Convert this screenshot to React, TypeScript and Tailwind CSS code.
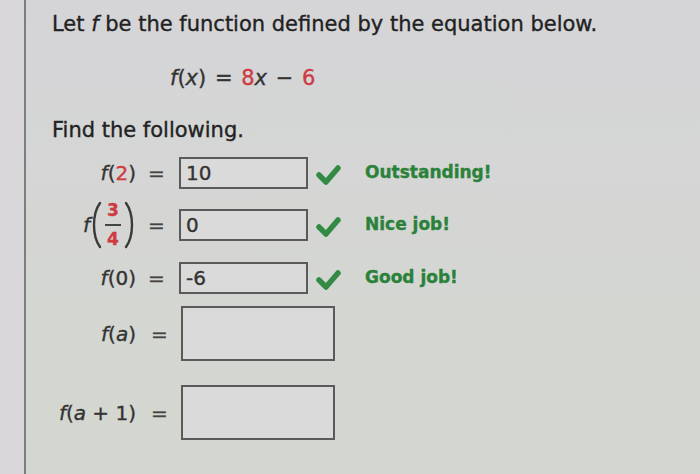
import React from 'react'

const font = "font-['DejaVu_Sans','Verdana',sans-serif]"

function Check() {
  return (
    <svg width="26" height="21" viewBox="0 0 26 21" className="shrink-0">
      <path d="M4 11 L11 18 L23 4" fill="none" stroke="#338a45" strokeWidth="5.5" strokeLinecap="round" strokeLinejoin="round" />
    </svg>
  )
}

function Paren({ flip }: { flip?: boolean }) {
  return (
    <svg width="12" height="48" viewBox="0 0 12 48" className={flip ? '-scale-x-100' : ''}>
      <path d="M10 2 C2 13 2 35 10 46" fill="none" stroke="#3a3a3a" strokeWidth="2.4" strokeLinecap="round" />
    </svg>
  )
}

function F() {
  return <span className="italic">f</span>
}

function Red({ children }: { children: React.ReactNode }) {
  return <span className="text-[#cf3a42]">{children}</span>
}

interface RowProps {
  label: React.ReactNode
  value?: string
  message?: string
  tall?: boolean
  className?: string
}

function Row({ label, value, message, tall, className }: RowProps) {
  return (
    <div className={`flex items-center ${tall ? 'h-[55px]' : 'h-[32px]'} ${className ?? ''}`}>
      <div className="flex w-[84px] shrink-0 justify-end text-[20px] text-[#333]">{label}</div>
      <div className={`text-[20px] text-[#444] ${tall ? 'ml-[15px] w-[30px]' : 'ml-[12px] w-[31px]'}`}>=</div>
      <div
        className={`flex h-full items-center border-2 border-[#5a5a5a] bg-[#dadada] pl-[5px] text-[20px] text-[#333] ${tall ? 'w-[154px]' : 'w-[129px]'}`}
      >
        {value}
      </div>
      {message && (
        <>
          <div className="ml-[7px] mt-[2px]">
            <Check />
          </div>
          <div className="ml-[24px] text-[17px] font-bold text-[#2a823a]">{message}</div>
        </>
      )}
    </div>
  )
}

export default function App() {
  return (
    <div className={`flex h-[474px] w-[700px] overflow-hidden bg-gradient-to-b from-[#d5d5d8] to-[#d4d7cf] ${font}`}>
      <div className="w-[26px] shrink-0 border-r-2 border-[#7d7d80] bg-[#d8d6d9]" />
      <div className="flex flex-1 flex-col pl-[26px] pt-[11px] [-webkit-text-stroke:0.35px_currentColor]">
        <p className="text-[21px] leading-[26px] text-[#222]">
          Let <F /> be the function defined by the equation below.
        </p>

        <p className="ml-[118px] mt-[28px] text-[21px] leading-[26px] text-[#333]">
          <F />
          (<span className="italic">x</span>) <span className="mx-[2px]">=</span> <Red>8</Red>
          <span className="italic">x</span> <span className="mx-[2px]">−</span> <Red>6</Red>
        </p>

        <p className="mt-[26px] text-[21px] leading-[26px] text-[#222]">Find the following.</p>

        <Row
          className="mt-[14px]"
          label={
            <span>
              <F />(<Red>2</Red>)
            </span>
          }
          value="10"
          message="Outstanding!"
        />

        <Row
          className="mt-[20px]"
          label={
            <span className="flex items-center">
              <F />
              <Paren />
              <span className="mx-[3px] flex flex-col items-center gap-[5px] text-[17px] font-bold leading-[17px]">
                <Red>3</Red>
                <span className="h-[1.5px] w-[16px] bg-[#444]" />
                <Red>4</Red>
              </span>
              <Paren flip />
            </span>
          }
          value="0"
          message="Nice job!"
        />

        <Row
          className="mt-[21px]"
          label={
            <span>
              <F />(0)
            </span>
          }
          value="-6"
          message="Good job!"
        />

        <Row
          className="mt-[12px]"
          tall
          label={
            <span>
              <F />(<span className="italic">a</span>)
            </span>
          }
        />

        <Row
          className="mt-[24px]"
          tall
          label={
            <span className="whitespace-nowrap">
              <F />(<span className="italic">a</span> + 1)
            </span>
          }
        />
      </div>
    </div>
  )
}
